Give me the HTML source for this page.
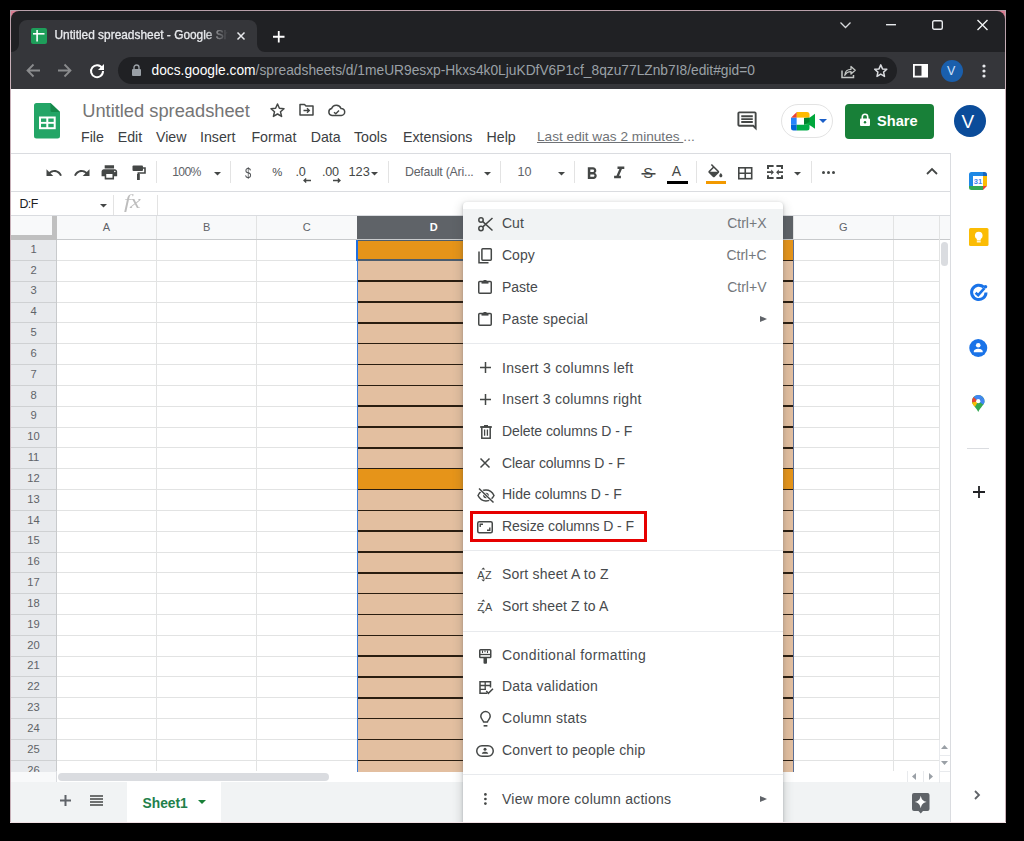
<!DOCTYPE html><html><head><meta charset="utf-8"><style>
*{box-sizing:border-box;margin:0;padding:0}
html,body{width:1024px;height:841px;overflow:hidden;background:#000;font-family:"Liberation Sans",sans-serif}
.a{position:absolute}
svg{position:absolute;overflow:visible}
.t{position:absolute;white-space:nowrap;line-height:1}
.hl{position:absolute;height:1px;background:#e2e3e3}
.vl{position:absolute;width:1px;background:#e2e3e3}
.sep{position:absolute;width:1px;background:#e3e3e3}
.mi{position:absolute;left:502px;font-size:14px;color:#474a4d;white-space:nowrap;line-height:1}
.sc{position:absolute;font-size:14px;color:#74787c;white-space:nowrap;line-height:1}
.msep{position:absolute;left:463px;width:320px;height:1px;background:#e8eaed}
</style></head><body><div class="a" style="left:10px;top:10px;width:996px;height:812px;background:#d97d92;border:1px solid #b9a0aa"></div>
<div class="a" style="left:11px;top:11px;width:994px;height:41px;background:#202124;border-radius:8px 8px 0 0"></div>
<div class="a" style="left:18.5px;top:19.5px;width:238px;height:33px;background:#35363a;border-radius:8px 8px 0 0"></div>
<svg style="left:10.5px;top:44px;width:8px;height:8px" viewBox="0 0 8 8"><path d="M8 0 V8 H0 A8 8 0 0 0 8 0Z" fill="#35363a"/></svg>
<svg style="left:256.5px;top:44px;width:8px;height:8px" viewBox="0 0 8 8"><path d="M0 0 V8 H8 A8 8 0 0 1 0 0Z" fill="#35363a"/></svg>
<svg style="left:31px;top:28px;width:16px;height:16px" viewBox="0 0 16 16"><rect x="0" y="0" width="16" height="16" rx="2" fill="#1e9e5a"/><rect x="2" y="5" width="11.5" height="1.6" fill="#fff"/><rect x="5.3" y="2" width="1.6" height="11.5" fill="#fff"/></svg>
<div class="t" style="left:54.5px;top:30.3px;font-size:11.9px;color:#e8eaed;width:173px;-webkit-text-stroke:0.3px #e8eaed;overflow:hidden;-webkit-mask-image:linear-gradient(to right,#000 150px,transparent 173px)">Untitled spreadsheet - Google Sheets</div>
<svg style="left:236.8px;top:32px;width:8px;height:8px" viewBox="0 0 8 8"><path d="M0.5 0.5 L7.5 7.5 M7.5 0.5 L0.5 7.5" stroke="#e8eaed" stroke-width="1.5"/></svg>
<svg style="left:273px;top:30.5px;width:11.5px;height:11.5px" viewBox="0 0 11.5 11.5"><path d="M5.75 0 V11.5 M0 5.75 H11.5" stroke="#fff" stroke-width="1.8"/></svg>
<svg style="left:840px;top:22px;width:11px;height:6px" viewBox="0 0 11 6"><path d="M0.5 0.5 L5.5 5.5 L10.5 0.5" stroke="#d8dadd" stroke-width="1.3" fill="none"/></svg>
<svg style="left:886px;top:24.3px;width:10px;height:1.4px" viewBox="0 0 10 1.4"><rect width="10" height="1.4" fill="#e8eaed"/></svg>
<svg style="left:931.5px;top:20px;width:11px;height:10px" viewBox="0 0 11 10"><rect x="0.7" y="0.7" width="9.6" height="8.6" rx="1.5" stroke="#e8eaed" stroke-width="1.4" fill="none"/></svg>
<svg style="left:977px;top:20px;width:11px;height:10px" viewBox="0 0 11 10"><path d="M0.5 0 L10.5 10 M10.5 0 L0.5 10" stroke="#f1f3f4" stroke-width="1.4"/></svg>
<div class="a" style="left:11px;top:52px;width:994px;height:36.5px;background:#35363a"></div>
<svg style="left:25.5px;top:63px;width:15px;height:15px" viewBox="0 0 15 15"><path d="M14 7.5 H2 M7.5 1.5 L1.5 7.5 L7.5 13.5" stroke="#8a8b8d" stroke-width="1.8" fill="none"/></svg>
<svg style="left:56.7px;top:63px;width:15px;height:15px" viewBox="0 0 15 15"><path d="M1 7.5 H13 M7.5 1.5 L13.5 7.5 L7.5 13.5" stroke="#8a8b8d" stroke-width="1.8" fill="none"/></svg>
<svg style="left:88.5px;top:62.5px;width:16px;height:16px" viewBox="0 0 16 16"><path d="M13.2 5.2 A6 6 0 1 0 14 8" stroke="#fff" stroke-width="2" fill="none"/><path d="M15 1 V7 H9 Z" fill="#fff"/></svg>
<div class="a" style="left:118px;top:56.5px;width:779px;height:27px;background:#202124;border-radius:14px"></div>
<svg style="left:132px;top:63.5px;width:9px;height:12px" viewBox="0 0 9 12"><path d="M2 5 V3.5 A2.5 2.5 0 0 1 7 3.5 V5" stroke="#9aa0a6" stroke-width="1.4" fill="none"/><rect x="0" y="5" width="9" height="7" rx="1" fill="#9aa0a6"/></svg>
<div class="t" style="left:151.5px;top:63.5px;font-size:13.77px;color:#fff">docs.google.com<span style="color:#9aa0a6">/spreadsheets/d/1meUR9esxp-Hkxs4k0LjuKDfV6P1cf_8qzu77LZnb7I8/edit#gid=0</span></div>
<svg style="left:841px;top:64.5px;width:15px;height:13.5px" viewBox="0 0 15 13.5"><path d="M1 5.5 V12.6 H12.5 V10" stroke="#c4c7c5" stroke-width="1.5" fill="none"/><path d="M3.8 10.3 C3.8 6 7 4.3 10 4.3 V1.5 L14.2 5.3 L10 9.1 V6.6 C7.5 6.6 5.2 7.6 3.8 10.3Z" stroke="#c4c7c5" stroke-width="1.3" fill="none" stroke-linejoin="round"/></svg>
<svg style="left:873.5px;top:64px;width:13.5px;height:13.5px" viewBox="0 0 13.5 13.5"><path d="M6.75 0.9 L8.5 4.9 L12.8 5.3 L9.6 8.1 L10.5 12.4 L6.75 10.1 L3 12.4 L3.9 8.1 L0.7 5.3 L5 4.9 Z" stroke="#dadce0" stroke-width="1.5" fill="none" stroke-linejoin="round"/></svg>
<svg style="left:912.5px;top:63.5px;width:15px;height:13.5px" viewBox="0 0 15 13.5"><rect x="0.9" y="0.9" width="13.2" height="11.7" stroke="#fff" stroke-width="1.8" fill="none"/><rect x="8.5" y="1" width="5.5" height="11.5" fill="#fff"/></svg>
<div class="a" style="left:941px;top:59.5px;width:22px;height:22px;border-radius:50%;background:#1a5fac"></div>
<div class="t" style="left:947px;top:65px;font-size:12.5px;color:#d2e3fc;">V</div>
<svg style="left:982px;top:63.5px;width:4px;height:14px" viewBox="0 0 4 14"><circle cx="2" cy="2" r="1.6" fill="#e8eaed"/><circle cx="2" cy="7" r="1.6" fill="#e8eaed"/><circle cx="2" cy="12" r="1.6" fill="#e8eaed"/></svg>
<div class="a" style="left:11px;top:88.5px;width:994px;height:733px;background:#fff"></div>
<svg style="left:33.5px;top:103px;width:26px;height:35.5px" viewBox="0 0 26 35.5"><path d="M2.5 0 H16.5 L26 9 V33 A2.5 2.5 0 0 1 23.5 35.5 H2.5 A2.5 2.5 0 0 1 0 33 V2.5 A2.5 2.5 0 0 1 2.5 0Z" fill="#23a566"/><path d="M16.5 0 L26 9 H18 A1.5 1.5 0 0 1 16.5 7.5Z" fill="#16884a"/><rect x="5" y="13.5" width="16.7" height="12.7" fill="#fff"/><rect x="7" y="15.5" width="5.3" height="3.4" fill="#23a566"/><rect x="14.3" y="15.5" width="5.4" height="3.4" fill="#23a566"/><rect x="7" y="20.8" width="5.3" height="3.4" fill="#23a566"/><rect x="14.3" y="20.8" width="5.4" height="3.4" fill="#23a566"/></svg>
<div class="t" style="left:82.2px;top:102.2px;font-size:18.3px;color:#757575;">Untitled spreadsheet</div>
<svg style="left:269.5px;top:102.5px;width:15px;height:14.5px" viewBox="0 0 15 14.5"><path d="M7.5 1 L9.4 5.3 L14 5.7 L10.5 8.8 L11.6 13.4 L7.5 11 L3.4 13.4 L4.5 8.8 L1 5.7 L5.6 5.3 Z" stroke="#444746" stroke-width="1.5" fill="none" stroke-linejoin="round"/></svg>
<svg style="left:298.5px;top:103px;width:15px;height:13px" viewBox="0 0 15 13"><path d="M1 1.5 H5.5 L7 3 H14 V12 H1 Z" stroke="#444746" stroke-width="1.5" fill="none" stroke-linejoin="round"/><path d="M4.5 7.5 H10 M8 5.3 L10.3 7.5 L8 9.7" stroke="#444746" stroke-width="1.4" fill="none"/></svg>
<svg style="left:327.5px;top:103.5px;width:17px;height:12.5px" viewBox="0 0 17 12.5"><path d="M4 11.5 A3.5 3.5 0 0 1 3.6 4.6 A5 5 0 0 1 13 4.4 A3.5 3.5 0 0 1 13.3 11.5 Z" stroke="#444746" stroke-width="1.5" fill="none"/><path d="M6 8.2 L7.8 9.8 L11 6.5" stroke="#444746" stroke-width="1.4" fill="none"/></svg>
<div class="t" style="left:81px;top:129.5px;font-size:14.2px;color:#3c4043;">File</div>
<div class="t" style="left:117.7px;top:129.5px;font-size:14.2px;color:#3c4043;">Edit</div>
<div class="t" style="left:156px;top:129.5px;font-size:14.2px;color:#3c4043;">View</div>
<div class="t" style="left:200px;top:129.5px;font-size:14.2px;color:#3c4043;">Insert</div>
<div class="t" style="left:251.4px;top:129.5px;font-size:14.2px;color:#3c4043;">Format</div>
<div class="t" style="left:310.7px;top:129.5px;font-size:14.2px;color:#3c4043;">Data</div>
<div class="t" style="left:354px;top:129.5px;font-size:14.2px;color:#3c4043;">Tools</div>
<div class="t" style="left:403px;top:129.5px;font-size:14.2px;color:#3c4043;">Extensions</div>
<div class="t" style="left:486.5px;top:129.5px;font-size:14.2px;color:#3c4043;">Help</div>
<div class="t" style="left:537px;top:129.5px;font-size:13.65px;color:#6f7276;"><span style="text-decoration:underline">Last edit was 2 minutes </span>...</div>
<svg style="left:735px;top:108.5px;width:24px;height:24px" viewBox="0 0 24 24"><path transform="translate(0.5,0.5) scale(.96)" d="M21.99 4c0-1.1-.89-2-1.99-2H4c-1.1 0-2 .9-2 2v12c0 1.1.9 2 2 2h14l4 4-.01-18zM20 4v13.17L18.83 16H4V4h16zM6 12h12v2H6zm0-3h12v2H6zm0-3h12v2H6z" fill="#444746"/></svg>
<div class="a" style="left:781px;top:103.8px;width:51.5px;height:34.5px;border-radius:17.5px;border:1px solid #e3e3e3;background:#fff"></div>
<svg style="left:791px;top:111.7px;width:24px;height:18.5px" viewBox="0 0 24 18.5"><path d="M0 5.8 L5.8 0 V5.8Z" fill="#ea4335"/><path d="M5.8 0 H16 Q18.5 0 18.5 2.5 V5.8 H5.8Z" fill="#ffba00"/><path d="M0 5.8 H5.8 V12.5 H0Z" fill="#2684fc"/><path d="M0 12.5 H5.8 V18.5 H2.5 Q0 18.5 0 16Z" fill="#0066da"/><path d="M5.8 12.5 H18.5 V16 Q18.5 18.5 16 18.5 H5.8Z" fill="#00ac47"/><path d="M13 12.5 V6 L18.5 5.8 L24 1.8 V16.8 L18.5 13 Z" fill="#00a73c"/><path d="M13 6 L18.5 5.8 V10 L13 12.5Z" fill="#00832d"/><rect x="5.8" y="5.8" width="7.2" height="6.7" fill="#fff"/></svg>
<svg style="left:818.7px;top:119px;width:8px;height:4px" viewBox="0 0 8 4"><path d="M0 0 H8 L4 4 Z" fill="#1a5fc8"/></svg>
<div class="a" style="left:845px;top:103.5px;width:89px;height:35px;border-radius:4px;background:#188038"></div>
<svg style="left:859.5px;top:113px;width:10px;height:13px" viewBox="0 0 10 13"><path d="M2.3 6 V4 A2.7 2.7 0 0 1 7.7 4 V6" stroke="#fff" stroke-width="1.6" fill="none"/><rect x="0" y="5.5" width="10" height="7.5" rx="1" fill="#fff"/><circle cx="5" cy="9.2" r="1.2" fill="#188038"/></svg>
<div class="t" style="left:877px;top:113.5px;font-size:14.6px;color:#fff;font-weight:bold">Share</div>
<div class="a" style="left:953.5px;top:105px;width:32px;height:32px;border-radius:50%;background:#0b4c9a"></div>
<div class="t" style="left:961.5px;top:111.5px;font-size:19px;color:#fff;">V</div>
<div class="a" style="left:11px;top:153px;width:939px;height:1px;background:#dadce0"></div>
<svg style="left:45px;top:163.5px;width:18px;height:18px" viewBox="0 0 18 18"><path transform="scale(.75)" d="M12.5 8c-2.65 0-5.05.99-6.9 2.6L2 7v9h9l-3.62-3.62c1.39-1.16 3.16-1.88 5.12-1.88 3.54 0 6.55 2.31 7.6 5.5l2.37-.78C21.08 11.03 17.15 8 12.5 8z" fill="#444746"/></svg>
<svg style="left:73.4px;top:163.5px;width:18px;height:18px" viewBox="0 0 18 18"><path transform="scale(.75)" d="M18.4 10.6C16.55 8.99 14.15 8 11.5 8c-4.65 0-8.58 3.03-9.96 7.22L3.9 16c1.05-3.19 4.05-5.5 7.6-5.5 1.95 0 3.73.72 5.12 1.88L13 16h9V7l-3.6 3.6z" fill="#444746"/></svg>
<svg style="left:100.4px;top:163px;width:19px;height:19px" viewBox="0 0 19 19"><path transform="scale(.78)" d="M19 8H5c-1.66 0-3 1.34-3 3v6h4v4h12v-4h4v-6c0-1.66-1.34-3-3-3zm-3 11H8v-5h8v5zm3-7c-.55 0-1-.45-1-1s.45-1 1-1 1 .45 1 1-.45 1-1 1zm-1-9H6v4h12V3z" fill="#444746"/></svg>
<svg style="left:131.5px;top:165px;width:14px;height:15px" viewBox="0 0 14 15"><rect x="0.5" y="0.5" width="10.5" height="5.5" rx="1" fill="#444746"/><path d="M11 3 H13 V8 H6.3 V14.5" stroke="#444746" stroke-width="1.6" fill="none"/><rect x="5" y="9" width="2.8" height="6" fill="#444746"/></svg>
<div class="sep" style="left:156px;top:161px;height:22px"></div>
<div class="t" style="left:172.3px;top:166.3px;font-size:12.2px;color:#5f6368;letter-spacing:-0.7px">100%</div>
<svg style="left:213.5px;top:171.5px;width:7px;height:4px" viewBox="0 0 7 4"><path d="M0 0 H7 L3.5 3.5Z" fill="#444746"/></svg>
<div class="sep" style="left:229.5px;top:161px;height:22px"></div>
<div class="t" style="left:244.9px;top:164.6px;font-size:15px;color:#4a4d50;transform:scaleX(0.75);transform-origin:0 0">$</div>
<div class="t" style="left:272.3px;top:166.8px;font-size:11.3px;color:#4a4d50;">%</div>
<div class="t" style="left:295.5px;top:165.5px;font-size:12.6px;color:#444746;letter-spacing:-0.3px">.0</div>
<svg style="left:302.5px;top:178px;width:8px;height:5px" viewBox="0 0 8 5"><path d="M8 2.5 H1.5 M3.2 0.5 L1 2.5 L3.2 4.5" stroke="#444746" stroke-width="1.3" fill="none"/></svg>
<div class="t" style="left:322px;top:165.5px;font-size:12.6px;color:#444746;letter-spacing:-0.3px">.00</div>
<svg style="left:332.5px;top:178px;width:8px;height:5px" viewBox="0 0 8 5"><path d="M0 2.5 H6.5 M4.8 0.5 L7 2.5 L4.8 4.5" stroke="#444746" stroke-width="1.3" fill="none"/></svg>
<div class="t" style="left:348.5px;top:166px;font-size:12.8px;color:#444746;">123</div>
<svg style="left:370.5px;top:171.5px;width:7px;height:4px" viewBox="0 0 7 4"><path d="M0 0 H7 L3.5 3.5Z" fill="#444746"/></svg>
<div class="sep" style="left:387.5px;top:161px;height:22px"></div>
<div class="t" style="left:405px;top:166px;font-size:12.4px;color:#5f6368;letter-spacing:-0.25px">Default (Ari...</div>
<svg style="left:483.5px;top:171.5px;width:7px;height:4px" viewBox="0 0 7 4"><path d="M0 0 H7 L3.5 3.5Z" fill="#444746"/></svg>
<div class="sep" style="left:500px;top:161px;height:22px"></div>
<div class="t" style="left:517.5px;top:166px;font-size:12.6px;color:#5f6368;">10</div>
<svg style="left:557.5px;top:171.5px;width:7px;height:4px" viewBox="0 0 7 4"><path d="M0 0 H7 L3.5 3.5Z" fill="#444746"/></svg>
<div class="sep" style="left:574px;top:161px;height:22px"></div>
<svg style="left:581.5px;top:163.5px;width:20px;height:20px" viewBox="0 0 20 20"><path transform="scale(.83)" d="M15.6 10.79c.97-.67 1.65-1.77 1.65-2.79 0-2.26-1.75-4-4-4H7v14h7.04c2.09 0 3.71-1.7 3.71-3.79 0-1.52-.86-2.82-2.15-3.42zM10 6.5h3c.83 0 1.5.67 1.5 1.5s-.67 1.5-1.5 1.5h-3v-3zm3.5 9H10v-3h3.5c.83 0 1.5.67 1.5 1.5s-.67 1.5-1.5 1.5z" fill="#444746"/></svg>
<svg style="left:609px;top:163px;width:20px;height:20px" viewBox="0 0 20 20"><path transform="scale(.85)" d="M10 4v3h2.21l-3.42 8H6v3h8v-3h-2.21l3.42-8H18V4z" fill="#444746"/></svg>
<svg style="left:640.5px;top:164.5px;width:15px;height:15px" viewBox="0 0 15 15"><text x="2.3" y="13.4" font-size="14.5" font-family="Liberation Sans" fill="#444746">S</text><rect x="0.5" y="8" width="14" height="1.6" fill="#444746"/></svg>
<div class="t" style="left:671.8px;top:163.7px;font-size:14px;color:#444746;">A</div>
<div class="a" style="left:666.5px;top:180.5px;width:21px;height:3.5px;background:#000"></div>
<div class="sep" style="left:696px;top:161px;height:22px"></div>
<svg style="left:705.7px;top:163.9px;width:19px;height:17px" viewBox="0 0 19 17"><path transform="scale(.78)" d="M16.56 8.94L7.62 0 6.21 1.41l2.38 2.38-5.15 5.15c-.59.59-.59 1.54 0 2.12l5.5 5.5c.29.29.68.44 1.06.44s.77-.15 1.06-.44l5.5-5.5c.59-.58.59-1.53 0-2.12zM5.21 10L10 5.21 14.79 10H5.21zM19 11.5s-2 2.17-2 3.5c0 1.1.9 2 2 2s2-.9 2-2c0-1.33-2-3.5-2-3.5z" fill="#444746"/></svg>
<div class="a" style="left:705.5px;top:180.5px;width:20px;height:3.5px;background:#f29900"></div>
<svg style="left:738px;top:166.5px;width:14.5px;height:12.5px" viewBox="0 0 14.5 12.5"><rect x="0.8" y="0.8" width="12.9" height="10.9" stroke="#444746" stroke-width="1.6" fill="none"/><path d="M7.25 0.5 V12 M0.5 6.25 H14" stroke="#444746" stroke-width="1.6"/></svg>
<svg style="left:767px;top:165.3px;width:16px;height:14px" viewBox="0 0 16 14"><path d="M1 3.9 V1.1 H6.6 M9.4 1.1 H15 V3.9 M1 10.2 V13 H6.6 M9.4 13 H15 V10.2" stroke="#444746" stroke-width="2" fill="none"/><path d="M0 7.2 H4.6 M11.4 7.2 H16" stroke="#444746" stroke-width="1.8"/><path d="M4.2 4.4 L6.9 7.2 L4.2 10Z M11.8 4.4 L9.1 7.2 L11.8 10Z" fill="#444746"/></svg>
<svg style="left:793.5px;top:171.5px;width:7px;height:4px" viewBox="0 0 7 4"><path d="M0 0 H7 L3.5 3.5Z" fill="#444746"/></svg>
<div class="sep" style="left:810.5px;top:161px;height:22px"></div>
<svg style="left:822px;top:171px;width:13px;height:3px" viewBox="0 0 13 3"><circle cx="1.5" cy="1.5" r="1.5" fill="#444746"/><circle cx="6.5" cy="1.5" r="1.5" fill="#444746"/><circle cx="11.5" cy="1.5" r="1.5" fill="#444746"/></svg>
<svg style="left:925.5px;top:167.5px;width:12px;height:7px" viewBox="0 0 12 7"><path d="M1 6 L6 1 L11 6" stroke="#444746" stroke-width="1.8" fill="none"/></svg>
<div class="a" style="left:11px;top:191px;width:939px;height:1px;background:#dadce0"></div>
<div class="t" style="left:19.5px;top:198px;font-size:12.4px;color:#202124;letter-spacing:-0.6px">D:F</div>
<svg style="left:99.5px;top:203.5px;width:7px;height:4px" viewBox="0 0 7 4"><path d="M0 0 H7 L3.5 3.5Z" fill="#444746"/></svg>
<div class="sep" style="left:113px;top:195px;height:20px"></div>
<div class="t" style="left:124px;top:193px;font-size:18px;color:#bdbdbd;font-family:&quot;Liberation Serif&quot;,serif;font-style:italic;transform:scaleX(1.35);transform-origin:0 0;letter-spacing:-0.5px">fx</div>
<div class="sep" style="left:156.5px;top:195px;height:20px"></div>
<div class="a" style="left:11px;top:215px;width:939px;height:1px;background:#dadce0"></div>
<div class="a" style="left:949.5px;top:153px;width:1px;height:669px;background:#dadce0"></div>
<div class="a" style="left:11px;top:216px;width:939px;height:23.5px;background:#f8f9fa"></div>
<div class="a" style="left:11px;top:239.5px;width:45px;height:532px;background:#e8eaed"></div>
<div class="a" style="left:0;top:0;width:1024px;height:771.6px;overflow:hidden">
<div class="hl" style="left:11px;top:239.0px;width:928px"></div>
<div class="hl" style="left:11px;top:259.8px;width:928px"></div>
<div class="hl" style="left:11px;top:280.7px;width:928px"></div>
<div class="hl" style="left:11px;top:301.5px;width:928px"></div>
<div class="hl" style="left:11px;top:322.3px;width:928px"></div>
<div class="hl" style="left:11px;top:343.1px;width:928px"></div>
<div class="hl" style="left:11px;top:364.0px;width:928px"></div>
<div class="hl" style="left:11px;top:384.8px;width:928px"></div>
<div class="hl" style="left:11px;top:405.6px;width:928px"></div>
<div class="hl" style="left:11px;top:426.5px;width:928px"></div>
<div class="hl" style="left:11px;top:447.3px;width:928px"></div>
<div class="hl" style="left:11px;top:468.1px;width:928px"></div>
<div class="hl" style="left:11px;top:489.0px;width:928px"></div>
<div class="hl" style="left:11px;top:509.8px;width:928px"></div>
<div class="hl" style="left:11px;top:530.6px;width:928px"></div>
<div class="hl" style="left:11px;top:551.5px;width:928px"></div>
<div class="hl" style="left:11px;top:572.3px;width:928px"></div>
<div class="hl" style="left:11px;top:593.1px;width:928px"></div>
<div class="hl" style="left:11px;top:613.9px;width:928px"></div>
<div class="hl" style="left:11px;top:634.8px;width:928px"></div>
<div class="hl" style="left:11px;top:655.6px;width:928px"></div>
<div class="hl" style="left:11px;top:676.4px;width:928px"></div>
<div class="hl" style="left:11px;top:697.3px;width:928px"></div>
<div class="hl" style="left:11px;top:718.1px;width:928px"></div>
<div class="hl" style="left:11px;top:738.9px;width:928px"></div>
<div class="hl" style="left:11px;top:759.8px;width:928px"></div>
<div class="hl" style="left:11px;top:780.6px;width:928px"></div>
<div class="vl" style="left:55.8px;top:216px;height:555px"></div>
<div class="t" style="left:56.3px;top:221.7px;width:100.2px;text-align:center;font-size:11px;color:#5f6368">A</div>
<div class="vl" style="left:156.0px;top:216px;height:555px"></div>
<div class="t" style="left:156.5px;top:221.7px;width:100.2px;text-align:center;font-size:11px;color:#5f6368">B</div>
<div class="vl" style="left:256.2px;top:216px;height:555px"></div>
<div class="t" style="left:256.7px;top:221.7px;width:100.3px;text-align:center;font-size:11px;color:#5f6368">C</div>
<div class="vl" style="left:356.5px;top:216px;height:555px"></div>
<div class="a" style="left:357.0px;top:216px;width:145.3px;height:23.5px;background:#5f6368"></div>
<div class="t" style="left:361.0px;top:221.7px;width:145.3px;text-align:center;font-size:11px;color:#fff;font-weight:bold">D</div>
<div class="vl" style="left:501.8px;top:216px;height:555px"></div>
<div class="a" style="left:502.3px;top:216px;width:145.3px;height:23.5px;background:#5f6368"></div>
<div class="t" style="left:502.3px;top:221.7px;width:145.3px;text-align:center;font-size:11px;color:#fff;font-weight:bold">E</div>
<div class="vl" style="left:647.1px;top:216px;height:555px"></div>
<div class="a" style="left:647.6px;top:216px;width:145.4px;height:23.5px;background:#5f6368"></div>
<div class="t" style="left:647.6px;top:221.7px;width:145.4px;text-align:center;font-size:11px;color:#fff;font-weight:bold">F</div>
<div class="vl" style="left:792.5px;top:216px;height:555px"></div>
<div class="t" style="left:793.0px;top:221.7px;width:100.4px;text-align:center;font-size:11px;color:#5f6368">G</div>
<div class="vl" style="left:892.9px;top:216px;height:555px"></div>
<div class="a" style="left:357px;top:239.5px;width:436px;height:20.83px;background:#e69419"></div>
<div class="a" style="left:357px;top:260.3px;width:436px;height:20.83px;background:#e3bfa0"></div>
<div class="a" style="left:357px;top:281.2px;width:436px;height:20.83px;background:#e3bfa0"></div>
<div class="a" style="left:357px;top:302.0px;width:436px;height:20.83px;background:#e3bfa0"></div>
<div class="a" style="left:357px;top:322.8px;width:436px;height:20.83px;background:#e3bfa0"></div>
<div class="a" style="left:357px;top:343.6px;width:436px;height:20.83px;background:#e3bfa0"></div>
<div class="a" style="left:357px;top:364.5px;width:436px;height:20.83px;background:#e3bfa0"></div>
<div class="a" style="left:357px;top:385.3px;width:436px;height:20.83px;background:#e3bfa0"></div>
<div class="a" style="left:357px;top:406.1px;width:436px;height:20.83px;background:#e3bfa0"></div>
<div class="a" style="left:357px;top:427.0px;width:436px;height:20.83px;background:#e3bfa0"></div>
<div class="a" style="left:357px;top:447.8px;width:436px;height:20.83px;background:#e3bfa0"></div>
<div class="a" style="left:357px;top:468.6px;width:436px;height:20.83px;background:#e69419"></div>
<div class="a" style="left:357px;top:489.5px;width:436px;height:20.83px;background:#e3bfa0"></div>
<div class="a" style="left:357px;top:510.3px;width:436px;height:20.83px;background:#e3bfa0"></div>
<div class="a" style="left:357px;top:531.1px;width:436px;height:20.83px;background:#e3bfa0"></div>
<div class="a" style="left:357px;top:552.0px;width:436px;height:20.83px;background:#e3bfa0"></div>
<div class="a" style="left:357px;top:572.8px;width:436px;height:20.83px;background:#e3bfa0"></div>
<div class="a" style="left:357px;top:593.6px;width:436px;height:20.83px;background:#e3bfa0"></div>
<div class="a" style="left:357px;top:614.4px;width:436px;height:20.83px;background:#e3bfa0"></div>
<div class="a" style="left:357px;top:635.3px;width:436px;height:20.83px;background:#e3bfa0"></div>
<div class="a" style="left:357px;top:656.1px;width:436px;height:20.83px;background:#e3bfa0"></div>
<div class="a" style="left:357px;top:676.9px;width:436px;height:20.83px;background:#e3bfa0"></div>
<div class="a" style="left:357px;top:697.8px;width:436px;height:20.83px;background:#e3bfa0"></div>
<div class="a" style="left:357px;top:718.6px;width:436px;height:20.83px;background:#e3bfa0"></div>
<div class="a" style="left:357px;top:739.4px;width:436px;height:20.83px;background:#e3bfa0"></div>
<div class="a" style="left:357px;top:760.2px;width:436px;height:20.83px;background:#e3bfa0"></div>
<div class="a" style="left:357px;top:259.5px;width:436px;height:1.6px;background:#2a1d10"></div>
<div class="a" style="left:357px;top:280.4px;width:436px;height:1.6px;background:#2a1d10"></div>
<div class="a" style="left:357px;top:301.2px;width:436px;height:1.6px;background:#2a1d10"></div>
<div class="a" style="left:357px;top:322.0px;width:436px;height:1.6px;background:#2a1d10"></div>
<div class="a" style="left:357px;top:342.8px;width:436px;height:1.6px;background:#2a1d10"></div>
<div class="a" style="left:357px;top:363.7px;width:436px;height:1.6px;background:#2a1d10"></div>
<div class="a" style="left:357px;top:384.5px;width:436px;height:1.6px;background:#2a1d10"></div>
<div class="a" style="left:357px;top:405.3px;width:436px;height:1.6px;background:#2a1d10"></div>
<div class="a" style="left:357px;top:426.2px;width:436px;height:1.6px;background:#2a1d10"></div>
<div class="a" style="left:357px;top:447.0px;width:436px;height:1.6px;background:#2a1d10"></div>
<div class="a" style="left:357px;top:467.8px;width:436px;height:1.6px;background:#2a1d10"></div>
<div class="a" style="left:357px;top:488.7px;width:436px;height:1.6px;background:#2a1d10"></div>
<div class="a" style="left:357px;top:509.5px;width:436px;height:1.6px;background:#2a1d10"></div>
<div class="a" style="left:357px;top:530.3px;width:436px;height:1.6px;background:#2a1d10"></div>
<div class="a" style="left:357px;top:551.2px;width:436px;height:1.6px;background:#2a1d10"></div>
<div class="a" style="left:357px;top:572.0px;width:436px;height:1.6px;background:#2a1d10"></div>
<div class="a" style="left:357px;top:592.8px;width:436px;height:1.6px;background:#2a1d10"></div>
<div class="a" style="left:357px;top:613.6px;width:436px;height:1.6px;background:#2a1d10"></div>
<div class="a" style="left:357px;top:634.5px;width:436px;height:1.6px;background:#2a1d10"></div>
<div class="a" style="left:357px;top:655.3px;width:436px;height:1.6px;background:#2a1d10"></div>
<div class="a" style="left:357px;top:676.1px;width:436px;height:1.6px;background:#2a1d10"></div>
<div class="a" style="left:357px;top:697.0px;width:436px;height:1.6px;background:#2a1d10"></div>
<div class="a" style="left:357px;top:717.8px;width:436px;height:1.6px;background:#2a1d10"></div>
<div class="a" style="left:357px;top:738.6px;width:436px;height:1.6px;background:#2a1d10"></div>
<div class="a" style="left:357px;top:759.5px;width:436px;height:1.6px;background:#2a1d10"></div>
<div class="a" style="left:357px;top:780.3px;width:436px;height:1.6px;background:#2a1d10"></div>
<div class="t" style="left:11px;top:243.7px;width:45px;text-align:center;font-size:11.2px;color:#5f6368">1</div>
<div class="t" style="left:11px;top:264.5px;width:45px;text-align:center;font-size:11.2px;color:#5f6368">2</div>
<div class="t" style="left:11px;top:285.4px;width:45px;text-align:center;font-size:11.2px;color:#5f6368">3</div>
<div class="t" style="left:11px;top:306.2px;width:45px;text-align:center;font-size:11.2px;color:#5f6368">4</div>
<div class="t" style="left:11px;top:327.0px;width:45px;text-align:center;font-size:11.2px;color:#5f6368">5</div>
<div class="t" style="left:11px;top:347.8px;width:45px;text-align:center;font-size:11.2px;color:#5f6368">6</div>
<div class="t" style="left:11px;top:368.7px;width:45px;text-align:center;font-size:11.2px;color:#5f6368">7</div>
<div class="t" style="left:11px;top:389.5px;width:45px;text-align:center;font-size:11.2px;color:#5f6368">8</div>
<div class="t" style="left:11px;top:410.3px;width:45px;text-align:center;font-size:11.2px;color:#5f6368">9</div>
<div class="t" style="left:11px;top:431.2px;width:45px;text-align:center;font-size:11.2px;color:#5f6368">10</div>
<div class="t" style="left:11px;top:452.0px;width:45px;text-align:center;font-size:11.2px;color:#5f6368">11</div>
<div class="t" style="left:11px;top:472.8px;width:45px;text-align:center;font-size:11.2px;color:#5f6368">12</div>
<div class="t" style="left:11px;top:493.7px;width:45px;text-align:center;font-size:11.2px;color:#5f6368">13</div>
<div class="t" style="left:11px;top:514.5px;width:45px;text-align:center;font-size:11.2px;color:#5f6368">14</div>
<div class="t" style="left:11px;top:535.3px;width:45px;text-align:center;font-size:11.2px;color:#5f6368">15</div>
<div class="t" style="left:11px;top:556.2px;width:45px;text-align:center;font-size:11.2px;color:#5f6368">16</div>
<div class="t" style="left:11px;top:577.0px;width:45px;text-align:center;font-size:11.2px;color:#5f6368">17</div>
<div class="t" style="left:11px;top:597.8px;width:45px;text-align:center;font-size:11.2px;color:#5f6368">18</div>
<div class="t" style="left:11px;top:618.6px;width:45px;text-align:center;font-size:11.2px;color:#5f6368">19</div>
<div class="t" style="left:11px;top:639.5px;width:45px;text-align:center;font-size:11.2px;color:#5f6368">20</div>
<div class="t" style="left:11px;top:660.3px;width:45px;text-align:center;font-size:11.2px;color:#5f6368">21</div>
<div class="t" style="left:11px;top:681.1px;width:45px;text-align:center;font-size:11.2px;color:#5f6368">22</div>
<div class="t" style="left:11px;top:702.0px;width:45px;text-align:center;font-size:11.2px;color:#5f6368">23</div>
<div class="t" style="left:11px;top:722.8px;width:45px;text-align:center;font-size:11.2px;color:#5f6368">24</div>
<div class="t" style="left:11px;top:743.6px;width:45px;text-align:center;font-size:11.2px;color:#5f6368">25</div>
<div class="t" style="left:11px;top:764.5px;width:45px;text-align:center;font-size:11.2px;color:#5f6368">26</div>
<div class="a" style="left:356.5px;top:239.5px;width:1px;height:540px;background:#3f7fd8"></div>
<div class="a" style="left:792.5px;top:239.5px;width:1px;height:540px;background:#5b6f96"></div>
<div class="a" style="left:11px;top:259.8px;width:45px;height:1px;background:#cfd1d3"></div>
<div class="a" style="left:11px;top:280.7px;width:45px;height:1px;background:#cfd1d3"></div>
<div class="a" style="left:11px;top:301.5px;width:45px;height:1px;background:#cfd1d3"></div>
<div class="a" style="left:11px;top:322.3px;width:45px;height:1px;background:#cfd1d3"></div>
<div class="a" style="left:11px;top:343.1px;width:45px;height:1px;background:#cfd1d3"></div>
<div class="a" style="left:11px;top:364.0px;width:45px;height:1px;background:#cfd1d3"></div>
<div class="a" style="left:11px;top:384.8px;width:45px;height:1px;background:#cfd1d3"></div>
<div class="a" style="left:11px;top:405.6px;width:45px;height:1px;background:#cfd1d3"></div>
<div class="a" style="left:11px;top:426.5px;width:45px;height:1px;background:#cfd1d3"></div>
<div class="a" style="left:11px;top:447.3px;width:45px;height:1px;background:#cfd1d3"></div>
<div class="a" style="left:11px;top:468.1px;width:45px;height:1px;background:#cfd1d3"></div>
<div class="a" style="left:11px;top:489.0px;width:45px;height:1px;background:#cfd1d3"></div>
<div class="a" style="left:11px;top:509.8px;width:45px;height:1px;background:#cfd1d3"></div>
<div class="a" style="left:11px;top:530.6px;width:45px;height:1px;background:#cfd1d3"></div>
<div class="a" style="left:11px;top:551.5px;width:45px;height:1px;background:#cfd1d3"></div>
<div class="a" style="left:11px;top:572.3px;width:45px;height:1px;background:#cfd1d3"></div>
<div class="a" style="left:11px;top:593.1px;width:45px;height:1px;background:#cfd1d3"></div>
<div class="a" style="left:11px;top:613.9px;width:45px;height:1px;background:#cfd1d3"></div>
<div class="a" style="left:11px;top:634.8px;width:45px;height:1px;background:#cfd1d3"></div>
<div class="a" style="left:11px;top:655.6px;width:45px;height:1px;background:#cfd1d3"></div>
<div class="a" style="left:11px;top:676.4px;width:45px;height:1px;background:#cfd1d3"></div>
<div class="a" style="left:11px;top:697.3px;width:45px;height:1px;background:#cfd1d3"></div>
<div class="a" style="left:11px;top:718.1px;width:45px;height:1px;background:#cfd1d3"></div>
<div class="a" style="left:11px;top:738.9px;width:45px;height:1px;background:#cfd1d3"></div>
<div class="a" style="left:11px;top:759.8px;width:45px;height:1px;background:#cfd1d3"></div>
<div class="a" style="left:11px;top:780.6px;width:45px;height:1px;background:#cfd1d3"></div>
<div class="a" style="left:55.8px;top:216px;width:1px;height:566px;background:#c8cacc"></div>
<div class="a" style="left:11px;top:239px;width:939px;height:1px;background:#c8cacc"></div>
<div class="a" style="left:357px;top:240px;width:145.3px;height:1.2px;background:#4e5d6c"></div>
<div class="a" style="left:357px;top:258.8px;width:145.3px;height:2px;background:#4b5c6e"></div>
<div class="a" style="left:356.2px;top:239.8px;width:2.1px;height:21px;background:#1f6fe0"></div>
</div>
<div class="a" style="left:11px;top:216px;width:41px;height:19px;background:#f8f9fa"></div>
<div class="a" style="left:52px;top:216px;width:4.5px;height:23.5px;background:#c0c0c0"></div>
<div class="a" style="left:11px;top:235px;width:45.5px;height:4.5px;background:#c0c0c0"></div>
<div class="a" style="left:939px;top:240px;width:11px;height:542px;background:#fff"></div>
<div class="a" style="left:938.5px;top:216px;width:1px;height:566px;background:#e2e3e3"></div>
<div class="a" style="left:940.5px;top:241.5px;width:7.5px;height:24.5px;border-radius:4px;background:#dadce0"></div>
<div class="a" style="left:56.5px;top:771.6px;width:893px;height:10.4px;background:#fff"></div>
<div class="a" style="left:11px;top:771.6px;width:44.8px;height:10.4px;background:#f8f9fa"></div>
<div class="a" style="left:55.8px;top:771px;width:1px;height:11px;background:#dadce0"></div>
<div class="a" style="left:57.5px;top:773px;width:271px;height:8px;border-radius:4px;background:#dadce0"></div>
<div class="a" style="left:11px;top:782px;width:939px;height:40.6px;background:#f1f3f4"></div>
<svg style="left:60.2px;top:795px;width:11px;height:11px" viewBox="0 0 11 11"><path d="M5.5 0 V11 M0 5.5 H11" stroke="#5f6368" stroke-width="2"/></svg>
<svg style="left:90px;top:795px;width:13px;height:11px" viewBox="0 0 13 11"><path d="M0 1 H13 M0 4 H13 M0 7 H13 M0 10 H13" stroke="#444746" stroke-width="1.6"/></svg>
<div class="a" style="left:126.5px;top:782px;width:94.5px;height:40px;background:#fff"></div>
<div class="t" style="left:142.5px;top:796.8px;font-size:13.8px;color:#22804a;font-weight:bold">Sheet1</div>
<svg style="left:197.5px;top:799.5px;width:8px;height:4px" viewBox="0 0 8 4"><path d="M0 0 H8 L4 4Z" fill="#188038"/></svg>
<svg style="left:969px;top:172px;width:18px;height:18px" viewBox="0 0 18 18"><path d="M4 0 H14 V4 H4 Z" fill="#1e88e5"/><path d="M0 2.5 A2.5 2.5 0 0 1 2.5 0 H4 V14 H0 Z" fill="#1e88e5"/><path d="M14 0 H15.5 A2.5 2.5 0 0 1 18 2.5 V4 H14Z" fill="#1565c0"/><path d="M14 4 H18 V14 H14Z" fill="#fbbc04"/><path d="M0 14 H14 V18 H2.5 A2.5 2.5 0 0 1 0 15.5Z" fill="#34a853"/><path d="M14 14 H18 L14 18Z" fill="#ea4335"/><path d="M4 4 H14 V14 H4Z" fill="#fff"/><text x="9" y="12.3" font-size="7.5" text-anchor="middle" font-family="Liberation Sans" font-weight="bold" fill="#4285f4">31</text></svg>
<svg style="left:968.5px;top:228px;width:19.5px;height:18px" viewBox="0 0 19.5 18"><rect width="19.5" height="18" rx="1.5" fill="#fbbc04"/><circle cx="9.75" cy="7.5" r="3.8" fill="#fff"/><rect x="7.8" y="9.5" width="3.9" height="3" fill="#fff"/><rect x="7.8" y="13.2" width="3.9" height="1.2" fill="#fff"/></svg>
<svg style="left:969.5px;top:283.5px;width:18px;height:18px" viewBox="0 0 18 18"><path d="M13.8 3.2 A7.2 7.2 0 1 0 16 8.5" stroke="#1a73e8" stroke-width="3" fill="none"/><path d="M5.6 8.8 L8.2 11.2 L14.5 4.2" stroke="#1a73e8" stroke-width="2.6" fill="none"/><circle cx="15.5" cy="2.8" r="1.8" fill="#1a73e8"/></svg>
<svg style="left:969px;top:339px;width:18.5px;height:18px" viewBox="0 0 18.5 18"><circle cx="9.25" cy="9" r="9" fill="#1a73e8"/><circle cx="9.25" cy="6.3" r="2.3" fill="#fff"/><path d="M4.8 12.6 C4.8 10.6 7.5 9.8 9.25 9.8 C11 9.8 13.7 10.6 13.7 12.6 V13.2 H4.8Z" fill="#fff"/></svg>
<svg style="left:972px;top:395px;width:12.5px;height:17px" viewBox="0 0 12.5 17"><path d="M6.25 0 A6.25 6.25 0 0 1 12.5 6.2 C12.5 9.8 8.5 12 6.25 17 C4 12 0 9.8 0 6.2 A6.25 6.25 0 0 1 6.25 0Z" fill="#34a853"/><path d="M1.7 1.9 L6.25 6.2 L0 7.5 C-0.1 4.9 0.6 3.1 1.7 1.9Z" fill="#ea4335"/><path d="M1.7 1.9 A6.25 6.25 0 0 1 6.25 0 A6.25 6.25 0 0 1 11 2.3 L6.25 6.2Z" fill="#4285f4"/><path d="M11 2.3 A6.25 6.25 0 0 1 12.5 6.2 C12.5 7.5 12 8.6 11.3 9.5 L6.25 6.2Z" fill="#4285f4"/><path d="M0 7.5 L6.25 6.2 L3 11.8 C1.5 10.3 0.2 8.8 0 7.5Z" fill="#fbbc04"/><circle cx="6.25" cy="6.2" r="2.1" fill="#fff"/></svg>
<div class="a" style="left:967px;top:447.5px;width:22px;height:1px;background:#dadce0"></div>
<svg style="left:972.5px;top:485.5px;width:12px;height:12px" viewBox="0 0 12 12"><path d="M6 0 V12 M0 6 H12" stroke="#202124" stroke-width="1.8"/></svg>
<svg style="left:974px;top:789.5px;width:6.5px;height:10px" viewBox="0 0 6.5 10"><path d="M1 1 L5 5 L1 9" stroke="#5f6368" stroke-width="1.8" fill="none"/></svg>
<svg style="left:912px;top:793px;width:17.5px;height:20.5px" viewBox="0 0 17.5 20.5"><path d="M2 0 H15.5 A2 2 0 0 1 17.5 2 V16 A2 2 0 0 1 15.5 18 H11 L8.75 20.5 L6.5 18 H2 A2 2 0 0 1 0 16 V2 A2 2 0 0 1 2 0Z" fill="#5f6368"/><path d="M8.75 2.8 C9.6 6.6 11 8.1 14.7 9 C11 9.9 9.6 11.4 8.75 15.2 C7.9 11.4 6.5 9.9 2.8 9 C6.5 8.1 7.9 6.6 8.75 2.8Z" fill="#fff"/></svg>
<div class="a" style="left:906.5px;top:770.5px;width:1px;height:11.5px;background:#e8eaed"></div>
<div class="a" style="left:922.5px;top:770.5px;width:1px;height:11.5px;background:#e8eaed"></div>
<div class="a" style="left:938.5px;top:739.5px;width:1px;height:43px;background:#e8eaed"></div>
<div class="a" style="left:939px;top:755px;width:11px;height:1px;background:#e8eaed"></div>
<div class="a" style="left:939px;top:770.5px;width:11px;height:1px;background:#e8eaed"></div>
<svg style="left:911.5px;top:773px;width:4px;height:7px" viewBox="0 0 4 7"><path d="M4 0 V7 L0 3.5Z" fill="#9aa0a6"/></svg>
<svg style="left:928.5px;top:773px;width:4px;height:7px" viewBox="0 0 4 7"><path d="M0 0 V7 L4 3.5Z" fill="#9aa0a6"/></svg>
<svg style="left:941px;top:744.5px;width:7px;height:4px" viewBox="0 0 7 4"><path d="M0 4 H7 L3.5 0Z" fill="#9aa0a6"/></svg>
<svg style="left:941px;top:761px;width:7px;height:4px" viewBox="0 0 7 4"><path d="M0 0 H7 L3.5 4Z" fill="#9aa0a6"/></svg>
<div class="a" style="left:463px;top:201.5px;width:320px;height:625px;background:#fff;border-radius:4px;box-shadow:0 1px 3px 0 rgba(60,64,67,.3),0 4px 8px 3px rgba(60,64,67,.15)"></div>
<div class="a" style="left:463px;top:208.5px;width:320px;height:31.5px;background:#f1f3f4"></div>
<div class="mi" style="top:216.0px">Cut</div>
<div class="sc" style="right:257.5px;top:216.0px">Ctrl+X</div>
<div class="mi" style="top:248.0px">Copy</div>
<div class="sc" style="right:257.5px;top:248.0px">Ctrl+C</div>
<div class="mi" style="top:279.8px">Paste</div>
<div class="sc" style="right:257.5px;top:279.8px">Ctrl+V</div>
<div class="mi" style="top:311.5px;letter-spacing:0.208px">Paste special</div>
<svg style="left:759.5px;top:315.5px;width:7px;height:6px" viewBox="0 0 7 6"><path d="M0 0 L7 3 L0 6Z" fill="#5f6368"/></svg>
<div class="mi" style="top:360.5px;letter-spacing:0.295px">Insert 3 columns left</div>
<div class="mi" style="top:392.0px;letter-spacing:0.262px">Insert 3 columns right</div>
<div class="mi" style="top:423.7px;letter-spacing:-0.068px">Delete columns D - F</div>
<div class="mi" style="top:455.5px;letter-spacing:-0.072px">Clear columns D - F</div>
<div class="mi" style="top:487.0px;letter-spacing:-0.006px">Hide columns D - F</div>
<div class="mi" style="top:518.7px;letter-spacing:-0.095px">Resize columns D - F</div>
<div class="mi" style="top:567.0px;letter-spacing:0.188px">Sort sheet A to Z</div>
<div class="mi" style="top:598.8px;letter-spacing:0.125px">Sort sheet Z to A</div>
<div class="mi" style="top:648.0px;letter-spacing:0.362px">Conditional formatting</div>
<div class="mi" style="top:679.0px;letter-spacing:0.229px">Data validation</div>
<div class="mi" style="top:711.3px;letter-spacing:0.273px">Column stats</div>
<div class="mi" style="top:743.0px;letter-spacing:0.152px">Convert to people chip</div>
<div class="mi" style="top:791.6px;letter-spacing:0.257px">View more column actions</div>
<svg style="left:759.5px;top:795.6px;width:7px;height:6px" viewBox="0 0 7 6"><path d="M0 0 L7 3 L0 6Z" fill="#5f6368"/></svg>
<div class="msep" style="top:342.5px"></div>
<div class="msep" style="top:549.8px"></div>
<div class="msep" style="top:630.5px"></div>
<div class="msep" style="top:774.2px"></div>
<svg style="left:477.5px;top:216.5px;width:15px;height:14.5px" viewBox="0 0 15 14.5"><circle cx="3" cy="3" r="2.2" stroke="#444746" stroke-width="1.5" fill="none"/><circle cx="3" cy="11.5" r="2.2" stroke="#444746" stroke-width="1.5" fill="none"/><path d="M4.8 4.6 L14.5 13.5 M4.8 9.9 L14.5 1" stroke="#444746" stroke-width="1.5"/></svg>
<svg style="left:478px;top:248px;width:14px;height:16px" viewBox="0 0 14 16"><path d="M1 3.5 V14.8 H10.5" stroke="#444746" stroke-width="1.5" fill="none"/><rect x="3.9" y="0.75" width="9.4" height="11.4" rx="0.8" stroke="#444746" stroke-width="1.5" fill="none"/></svg>
<svg style="left:478.3px;top:280.0px;width:14px;height:14px" viewBox="0 0 14 14"><rect x="0.75" y="1.6" width="12.5" height="11.7" rx="1" stroke="#444746" stroke-width="1.5" fill="none"/><rect x="3.5" y="1" width="7" height="2.6" fill="#444746"/><rect x="5.5" y="0" width="3" height="1.5" fill="#444746"/></svg>
<svg style="left:478.3px;top:311.7px;width:14px;height:14px" viewBox="0 0 14 14"><rect x="0.75" y="1.6" width="12.5" height="11.7" rx="1" stroke="#444746" stroke-width="1.5" fill="none"/><rect x="3.5" y="1" width="7" height="2.6" fill="#444746"/><rect x="5.5" y="0" width="3" height="1.5" fill="#444746"/></svg>
<svg style="left:479.5px;top:362.0px;width:11px;height:11px" viewBox="0 0 11 11"><path d="M5.5 0 V11 M0 5.5 H11" stroke="#444746" stroke-width="1.5"/></svg>
<svg style="left:479.5px;top:393.5px;width:11px;height:11px" viewBox="0 0 11 11"><path d="M5.5 0 V11 M0 5.5 H11" stroke="#444746" stroke-width="1.5"/></svg>
<svg style="left:479.5px;top:424.5px;width:12px;height:14px" viewBox="0 0 12 14"><path d="M0 2 H12 M4 0.75 H8" stroke="#444746" stroke-width="1.5"/><rect x="1.8" y="2" width="8.4" height="11.2" stroke="#444746" stroke-width="1.5" fill="none"/><path d="M4.6 4.5 V10.8 M7.4 4.5 V10.8" stroke="#444746" stroke-width="1.3"/></svg>
<svg style="left:480px;top:458px;width:10px;height:10px" viewBox="0 0 10 10"><path d="M0.5 0.5 L9.5 9.5 M9.5 0.5 L0.5 9.5" stroke="#444746" stroke-width="1.5"/></svg>
<svg style="left:476.5px;top:488px;width:18px;height:15px" viewBox="0 0 18 15"><path d="M1 7.5 C3 3.5 6 2 9 2 C12 2 15 3.5 17 7.5 C15 11.5 12 13 9 13 C6 13 3 11.5 1 7.5Z" stroke="#444746" stroke-width="1.5" fill="none"/><circle cx="9" cy="7.5" r="2.8" fill="#444746"/><path d="M2 0.5 L16.5 14.5" stroke="#fff" stroke-width="3"/><path d="M2 0.5 L16.5 14.5" stroke="#444746" stroke-width="1.5"/></svg>
<svg style="left:477px;top:520.5px;width:16px;height:12.5px" viewBox="0 0 16 12.5"><rect x="0.75" y="0.75" width="14.5" height="11" rx="1.5" stroke="#444746" stroke-width="1.5" fill="none"/><path d="M3.2 6 V3.2 H6 M12.8 6.5 V9.3 H10" stroke="#444746" stroke-width="1.4" fill="none"/></svg>
<svg style="left:477px;top:567px;width:16px;height:15px" viewBox="0 0 16 15"><text x="0.2" y="11.8" font-size="10.8" font-family="Liberation Sans" fill="#444746">A</text><text x="8" y="11.8" font-size="10.8" font-family="Liberation Sans" fill="#444746">Z</text><path d="M6.3 0.5 L8.3 2.4 H4.3Z M6.3 14.5 L8.3 12.6 H4.3Z" fill="#444746"/></svg>
<svg style="left:477px;top:598.8px;width:16px;height:15px" viewBox="0 0 16 15"><text x="0.2" y="11.8" font-size="10.8" font-family="Liberation Sans" fill="#444746">Z</text><text x="8" y="11.8" font-size="10.8" font-family="Liberation Sans" fill="#444746">A</text><path d="M6.3 0.5 L8.3 2.4 H4.3Z M6.3 14.5 L8.3 12.6 H4.3Z" fill="#444746"/></svg>
<svg style="left:479px;top:648.5px;width:12.5px;height:15px" viewBox="0 0 12.5 15"><rect x="0.75" y="0.75" width="11" height="7.8" rx="0.8" stroke="#444746" stroke-width="1.5" fill="none"/><path d="M1 5.5 H11.5" stroke="#444746" stroke-width="1.3"/><path d="M3.5 1.5 V4 M6 1.5 V3.2 M8.5 1.5 V4" stroke="#444746" stroke-width="1.1"/><rect x="4.5" y="8.5" width="3.5" height="6.2" rx="1" fill="#444746"/></svg>
<svg style="left:478.5px;top:680.5px;width:14.5px;height:13.5px" viewBox="0 0 14.5 13.5"><path d="M8 12.3 H1 V0.75 H11.5 V6.5" stroke="#444746" stroke-width="1.5" fill="none"/><path d="M1 4.5 H11.5 M1 8.3 H7 M6.2 0.75 V8.3" stroke="#444746" stroke-width="1.3"/><path d="M7.3 10 L9.3 12.3 L14 7.8" stroke="#444746" stroke-width="1.5" fill="none"/></svg>
<svg style="left:480px;top:711px;width:11px;height:16px" viewBox="0 0 11 16"><path d="M3.5 11 C3.5 9.5 0.8 8.3 0.8 5.3 A4.7 4.7 0 0 1 10.2 5.3 C10.2 8.3 7.5 9.5 7.5 11 Z" stroke="#444746" stroke-width="1.5" fill="none" stroke-linejoin="round"/><path d="M3.6 14.8 H7.4" stroke="#444746" stroke-width="1.6"/></svg>
<svg style="left:476.3px;top:745px;width:18px;height:12px" viewBox="0 0 18 12"><rect x="0.75" y="0.75" width="16.5" height="10.5" rx="5.25" stroke="#444746" stroke-width="1.5" fill="none"/><circle cx="9" cy="4.2" r="1.5" fill="#444746"/><path d="M5.8 8.8 C5.8 7.3 7.8 6.8 9 6.8 C10.2 6.8 12.2 7.3 12.2 8.8Z" fill="#444746"/></svg>
<svg style="left:484px;top:793px;width:3px;height:12px" viewBox="0 0 3 12"><circle cx="1.4" cy="1.4" r="1.35" fill="#444746"/><circle cx="1.4" cy="6" r="1.35" fill="#444746"/><circle cx="1.4" cy="10.6" r="1.35" fill="#444746"/></svg>
<div class="a" style="left:470.3px;top:510.8px;width:177.2px;height:31.2px;border:3px solid #e60000"></div>
<div class="a" style="left:0;top:822.6px;width:1024px;height:19px;background:#000"></div>
<div class="a" style="left:1006px;top:0;width:18px;height:841px;background:#000"></div>
<div class="a" style="left:1005px;top:40px;width:1px;height:782px;background:#c8b0b8"></div>
<div class="a" style="left:10px;top:40px;width:1px;height:782px;background:#c8b0b8"></div>
<div class="a" style="left:10px;top:821.8px;width:996px;height:0.8px;background:#f0e0e4"></div></body></html>
